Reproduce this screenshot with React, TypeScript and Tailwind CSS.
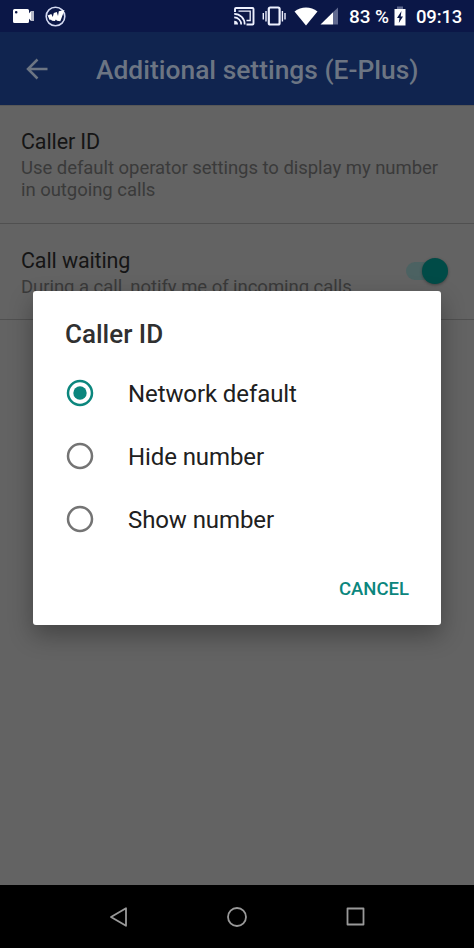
import type { ReactNode } from "react";

function StatusBar() {
  return (
    <header className="flex h-8 shrink-0 items-center bg-[#0b1747] text-white">
      <svg className="ml-3 h-5 w-6" viewBox="0 0 24 20" fill="currentColor">
        <path fillRule="evenodd" d="M2.500 3H15.500a1.500 1.500 0 0 1 1.500 1.500v11A1.500 1.500 0 0 1 15.500 17H2.500A1.500 1.500 0 0 1 1 15.500V4.500A1.500 1.500 0 0 1 2.500 3Zm1.700 2a1.300 1.300 0 1 0 0 2.600a1.300 1.300 0 0 0 0-2.600Z" />
        <path d="m16.500 8 2.500-3v10l-2.500-3z" />
        <path d="M19 5h3v10h-3z" opacity=".7" />
      </svg>
      <svg className="ml-[9px] h-[21px] w-[21px]" viewBox="0 0 21 21">
        <circle cx="10.500" cy="10.500" r="9.300" fill="none" stroke="#d4daf2" strokeWidth="1.600" />
        <path d="M2.600 9.500 6.300 8l1.500 3 1-4 3-1 1.200 4 .8-4.700 5.700-1.200L15.300 15.300 12 14.800l-1.100-1.300-1 1.500-2.900-.3-1.200-1.300-1 .8z" fill="white" />
      </svg>
      <svg className="ml-[167px] h-5 w-[23px]" viewBox="0 0 23 20" fill="none" stroke="#eef1ff" strokeWidth="1.900">
        <path d="M2 6V3a1 1 0 0 1 1-1h16.500a1 1 0 0 1 1 1v14.500a1 1 0 0 1-1 1H13.500" />
        <path d="M5.500 5.200h11.700v9.300h-3.700" strokeWidth="1.300" />
        <path d="M1.200 7.800a10.500 10.500 0 0 1 10.500 10.700M1.200 11.400a7 7 0 0 1 7 7.100" strokeWidth="1.700" />
        <path d="M1.200 14.700A3.800 3.800 0 0 1 5 18.500H1.200z" fill="#eef1ff" stroke="none" />
      </svg>
      <svg className="ml-[6px] h-5 w-6" viewBox="0 0 24 20" fill="none" stroke="#eef1ff">
        <rect x="6.800" y="1.500" width="10.800" height="17" rx="1.500" strokeWidth="2.200" />
        <path d="M1.300 7v6.500M4 5v10.500M20.400 5v10.500M23 7v6.500" strokeWidth="1.400" />
      </svg>
      <svg className="ml-[8px] h-5 w-6" viewBox="0 0 24 20" fill="currentColor">
        <path d="M.5 5.500C7 .2 17 .2 23.500 5.500L12 19.500z" />
      </svg>
      <svg className="ml-[2px] h-[18px] w-[18px]" viewBox="0 0 18 18">
        <path d="M18 .5v17H13V5.300z" fill="#616a90" />
        <path d="M13 5.300v12.200H.5z" fill="white" />
      </svg>
      <span className="mt-[2px] ml-[11px] w-[40px] whitespace-nowrap text-[19px] leading-8 tracking-[-0.100px] font-medium">83 %</span>
      <svg className="ml-[5px] h-5 w-3" viewBox="0 0 12 20">
        <path d="M3 .5h6v3H3z" fill="#616a90" />
        <path d="M.5 3h11v16.500H.5z" fill="white" />
        <path d="M7.500 5 3 12h2.500L4.800 17 9 10.500H6.700z" fill="#0b1747" />
      </svg>
      <span className="mt-[2px] ml-[10px] whitespace-nowrap text-[18.500px] leading-8 tracking-[-0.150px] font-medium">09:13</span>
    </header>
  );
}

function Option({ label, selected = false }: { label: string; selected?: boolean }) {
  return (
    <div className="flex h-[63.200px] items-center">
      <svg className={`h-7 w-7 ${selected ? "text-[#0b867d]" : "text-[#747474]"}`} viewBox="0 0 28 28">
        <circle cx="14" cy="14" r="12" fill="none" stroke="currentColor" strokeWidth="2.500" />
        {selected && <circle cx="14" cy="14" r="6.700" fill="currentColor" />}
      </svg>
      <span className="mt-[3px] ml-[34px] text-[24px] leading-8 tracking-[-0.100px] text-[#202020]">{label}</span>
    </div>
  );
}

function Setting({ title, children }: { title: string; children: ReactNode }) {
  return (
    <div>
      <h2 className="text-[21.500px] leading-7 tracking-[-0.120px] text-[#151515]">{title}</h2>
      <div className="mt-[2px] whitespace-nowrap text-[18.500px] leading-[21.500px] tracking-[-0.040px] text-[#3a3a3a]">{children}</div>
    </div>
  );
}

export default function App() {
  return (
    <div className="relative flex h-[948px] w-[474px] flex-col overflow-hidden bg-[#636363] font-['Roboto',sans-serif]">
      <StatusBar />
      <div className="flex h-[73px] shrink-0 items-center bg-[#10244f] text-[#6c7583]">
        <svg className="ml-[26px] h-[22px] w-[22px]" viewBox="0 0 22 22" fill="none" stroke="currentColor" strokeWidth="2.500">
          <path d="M21.500 11H2M11.500 1.500 2 11l9.500 9.500" />
        </svg>
        <h1 className="mt-[2px] ml-[48px] whitespace-nowrap text-[26.400px] leading-8 font-medium">Additional settings (E-Plus)</h1>
      </div>
      <main className="flex-1">
        <section className="h-[119px] border-t border-b border-t-[#575757] border-b-[#505050] pt-[22px] pl-[21px]">
          <Setting title="Caller ID">
            Use default operator settings to display my number
            <br />
            in outgoing calls
          </Setting>
        </section>
        <section className="flex h-24 justify-between border-b border-[#505050] pt-[23px] pr-[26px] pl-[21px]">
          <Setting title="Call waiting">During a call, notify me of incoming calls</Setting>
          <div className="mt-[15px] flex h-[18px] w-[42px] items-center justify-end rounded-full bg-[#4c6262]">
            <div className="h-[26px] w-[26px] shrink-0 rounded-full bg-[#004b47] shadow-[0_1px_3px_rgba(0,0,0,0.35)]" />
          </div>
        </section>
      </main>
      <nav className="flex h-[63px] shrink-0 items-center justify-between bg-black pr-[107px] pl-[107px] text-[#999]">
        <svg className="h-6 w-6" viewBox="0 0 24 24" fill="none" stroke="currentColor" strokeWidth="1.800" strokeLinejoin="round"><path d="M19 3.200v17.600L4 12z" /></svg>
        <svg className="h-6 w-6" viewBox="0 0 24 24" fill="none" stroke="currentColor" strokeWidth="1.800"><circle cx="12" cy="12" r="9" /></svg>
        <svg className="h-6 w-6" viewBox="0 0 24 24" fill="none" stroke="currentColor" strokeWidth="1.800" strokeLinejoin="round"><path d="M4.500 3.500h16v16h-16z" /></svg>
      </nav>
      <div role="dialog" className="absolute top-[291px] left-[33px] flex h-[334px] w-[408px] flex-col rounded-[3px] bg-white px-8 shadow-[0_10px_24px_rgba(0,0,0,0.32)]">
        <h2 className="mt-[27px] text-[26px] leading-8 font-medium text-[#303030]">Caller ID</h2>
        <div className="mt-[11px] ml-[1px]">
          <Option label="Network default" selected />
          <Option label="Hide number" />
          <Option label="Show number" />
        </div>
        <button className="mt-[26px] self-end text-[18.500px] leading-6 font-medium text-[#0b867d]">CANCEL</button>
      </div>
    </div>
  );
}
